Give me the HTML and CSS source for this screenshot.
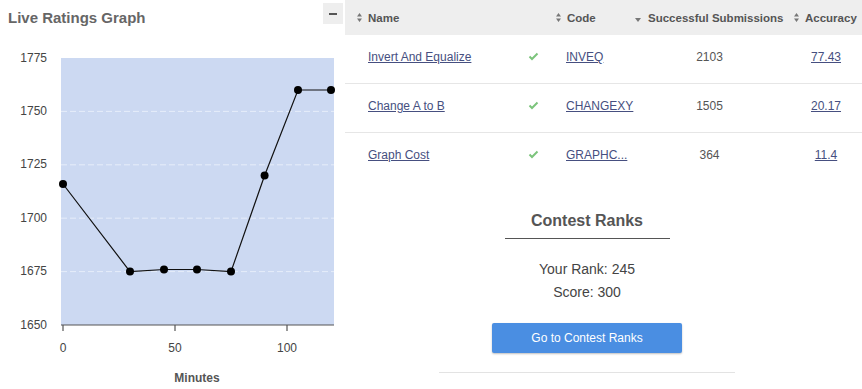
FILE: index.html
```html
<!DOCTYPE html>
<html lang="en">
<head>
    <meta charset="UTF-8">
    <meta name="viewport" content="width=device-width, initial-scale=1.0">
    <title>Contest Dashboard</title>
    <link rel="stylesheet" href="styles.css">
</head>
<body>
    <div class="page">
        <!-- Ratings graph -->
        <section class="graph-panel">
            <div class="panel-head">
                <h2 class="panel-title">Live Ratings Graph</h2>
                <button class="collapse-btn"><span></span></button>
            </div>
            <svg class="chart" width="345" height="359" viewBox="0 30 345 359">
                <rect x="61" y="58" width="273" height="267" fill="#ccd9f2"/>
                <g class="grid">
                    <line x1="61" y1="111.4" x2="334" y2="111.4"/>
                    <line x1="61" y1="164.8" x2="334" y2="164.8"/>
                    <line x1="61" y1="218.2" x2="334" y2="218.2"/>
                    <line x1="61" y1="271.6" x2="334" y2="271.6"/>
                </g>
                <g class="axis">
                    <line x1="61" y1="325" x2="334" y2="325"/>
                    <line x1="63" y1="325" x2="63" y2="331"/>
                    <line x1="175" y1="325" x2="175" y2="331"/>
                    <line x1="287" y1="325" x2="287" y2="331"/>
                </g>
                <g class="y-labels">
                    <text x="47" y="62">1775</text>
                    <text x="47" y="115">1750</text>
                    <text x="47" y="168">1725</text>
                    <text x="47" y="222">1700</text>
                    <text x="47" y="275">1675</text>
                    <text x="47" y="329">1650</text>
                </g>
                <g class="x-labels">
                    <text x="63" y="352">0</text>
                    <text x="175" y="352">50</text>
                    <text x="287" y="352">100</text>
                </g>
                <text class="x-title" x="197" y="382">Minutes</text>
                <polyline class="series" points="63,184 130,271.6 164,269.5 197,269.5 231,271.6 264.6,175.5 298,90 331,90"/>
                <g class="dots">
                    <circle cx="63" cy="184" r="4"/>
                    <circle cx="130" cy="271.6" r="4"/>
                    <circle cx="164" cy="269.5" r="4"/>
                    <circle cx="197" cy="269.5" r="4"/>
                    <circle cx="231" cy="271.6" r="4"/>
                    <circle cx="264.6" cy="175.5" r="4"/>
                    <circle cx="298" cy="90" r="4"/>
                    <circle cx="331" cy="90" r="4"/>
                </g>
            </svg>
        </section>

        <!-- Problems + ranks -->
        <section class="side">
            <div class="prob-table">
                <div class="prob-row prob-head">
                    <div class="cell c-name"><svg class="sort" width="5" height="9" viewBox="0 0 5 9"><path d="M2.5 0 5 3.6H0zM2.5 9 5 5.4H0z"/></svg>Name</div>
                    <div class="cell c-code"><svg class="sort" width="5" height="9" viewBox="0 0 5 9"><path d="M2.5 0 5 3.6H0zM2.5 9 5 5.4H0z"/></svg>Code</div>
                    <div class="cell c-subs"><svg class="sort" width="6" height="9" viewBox="0 0 6 9"><path d="M0 5 6 5 3 9z"/></svg>Successful Submissions</div>
                    <div class="cell c-acc"><svg class="sort" width="5" height="9" viewBox="0 0 5 9"><path d="M2.5 0 5 3.6H0zM2.5 9 5 5.4H0z"/></svg>Accuracy</div>
                </div>

                <div class="prob-row prob-item">
                    <div class="cell c-name"><a href="#">Invert And Equalize</a><svg class="tick" width="11" height="9" viewBox="0 0 11 9"><path d="M1.5 4.5 4 7 9.5 1.5"/></svg></div>
                    <div class="cell c-code"><a href="#">INVEQ</a></div>
                    <div class="cell c-subs">2103</div>
                    <div class="cell c-acc"><a href="#">77.43</a></div>
                </div>
                <div class="prob-row prob-item">
                    <div class="cell c-name"><a href="#">Change A to B</a><svg class="tick" width="11" height="9" viewBox="0 0 11 9"><path d="M1.5 4.5 4 7 9.5 1.5"/></svg></div>
                    <div class="cell c-code"><a href="#">CHANGEXY</a></div>
                    <div class="cell c-subs">1505</div>
                    <div class="cell c-acc"><a href="#">20.17</a></div>
                </div>
                <div class="prob-row prob-item last">
                    <div class="cell c-name"><a href="#">Graph Cost</a><svg class="tick" width="11" height="9" viewBox="0 0 11 9"><path d="M1.5 4.5 4 7 9.5 1.5"/></svg></div>
                    <div class="cell c-code"><a href="#">GRAPHC...</a></div>
                    <div class="cell c-subs">364</div>
                    <div class="cell c-acc"><a href="#">11.4</a></div>
                </div>
            </div>

            <div class="ranks">
                <h3 class="ranks-title">Contest Ranks</h3>
                <p class="ranks-line">Your Rank: 245</p>
                <p class="ranks-line">Score: 300</p>
                <button class="ranks-btn">Go to Contest Ranks</button>
            </div>
        </section>
    </div>
</body>
</html>
```

FILE: styles.css
```css
body {
    margin: 0;
    font-family: "Liberation Sans", Arial, sans-serif;
    color: #555;
    background: #fff;
}

.page {
    display: flex;
    width: 862px;
    height: 389px;
    overflow: hidden;
}

/* graph panel */
.graph-panel {
    width: 345px;
    flex: none;
}

.panel-head {
    display: flex;
    justify-content: space-between;
    height: 30px;
}

.panel-title {
    margin: 0;
    padding: 9px 0 0 8px;
    font-size: 15px;
    line-height: 17px;
    font-weight: bold;
    color: #666;
}

.collapse-btn {
    width: 20px;
    height: 21px;
    margin: 3px 2px 0 0;
    padding: 0;
    border: none;
    background: #eee;
    display: flex;
    align-items: center;
    justify-content: center;
}

.collapse-btn span {
    display: block;
    width: 8px;
    height: 2px;
    background: #555;
}

.chart {
    display: block;
}

.chart text {
    font-family: "Liberation Sans", Arial, sans-serif;
    font-size: 12px;
    fill: #444;
}

.grid line {
    stroke: #e6edfa;
    stroke-width: 1;
    stroke-dasharray: 6 3;
}

.axis line {
    stroke: #555;
    stroke-width: 1.2;
}

.y-labels text {
    text-anchor: end;
}

.x-labels text {
    text-anchor: middle;
}

.chart .x-title {
    text-anchor: middle;
    font-weight: bold;
    fill: #555;
}

.series {
    fill: none;
    stroke: #111;
    stroke-width: 1.2;
}

.dots circle {
    fill: #000;
}

/* problems table */
.side {
    flex: 1;
}

.prob-row {
    display: grid;
    grid-template-columns: 200px 80px 165px 72px;
    height: 48px;
    border-bottom: 1px solid #e6e6e6;
    font-size: 12px;
    line-height: 14px;
}

.prob-row.last {
    border-bottom: none;
}

.prob-head {
    height: 35px;
    background: #eee;
    border-bottom: none;
    font-size: 11.5px;
    font-weight: bold;
    color: #555;
}

.prob-head .cell {
    display: flex;
    align-items: center;
    white-space: nowrap;
}

.sort {
    fill: #777;
    margin-right: 6px;
}

.prob-head .c-name {
    padding-left: 12px;
}

.prob-head .c-code {
    padding-left: 11px;
}

.prob-head .c-subs {
    padding-left: 10px;
}

.prob-head .c-subs .sort {
    margin-right: 7px;
}

.prob-head .c-acc {
    padding-left: 4px;
}

.prob-item .cell {
    padding-top: 15px;
}

.prob-item .c-name {
    display: flex;
    justify-content: space-between;
    align-items: flex-start;
    padding-left: 23px;
    padding-right: 6px;
}

.tick {
    margin-top: 2px;
    fill: none;
    stroke: #7cc47c;
    stroke-width: 2;
}

.prob-item .c-code {
    padding-left: 21px;
}

.prob-item .c-subs,
.prob-item .c-acc {
    text-align: center;
}

.prob-item .c-subs {
    padding-left: 4px;
}

.prob-item a {
    color: #464f80;
    text-decoration: underline;
}

/* contest ranks */
.ranks {
    width: 296px;
    margin: 31px 0 0 94px;
    padding-bottom: 19px;
    text-align: center;
    border-bottom: 1px solid #e3e3e3;
}

.ranks-title {
    width: 165px;
    margin: 0 auto;
    padding-bottom: 8px;
    font-size: 16px;
    line-height: 18px;
    font-weight: bold;
    color: #555;
    border-bottom: 1px solid #555;
}

.ranks-line {
    margin: 0;
    font-size: 14px;
    line-height: 23px;
    color: #444;
}

.ranks-title + .ranks-line {
    margin-top: 19px;
}

.ranks-btn {
    display: block;
    width: 190px;
    height: 30px;
    margin: 19px auto 0;
    border: none;
    border-radius: 2px;
    background: #4a8ee2;
    color: #fff;
    font-family: "Liberation Sans", Arial, sans-serif;
    font-size: 12px;
    box-shadow: 0 1px 2px rgba(0, 0, 0, 0.25);
}
```
